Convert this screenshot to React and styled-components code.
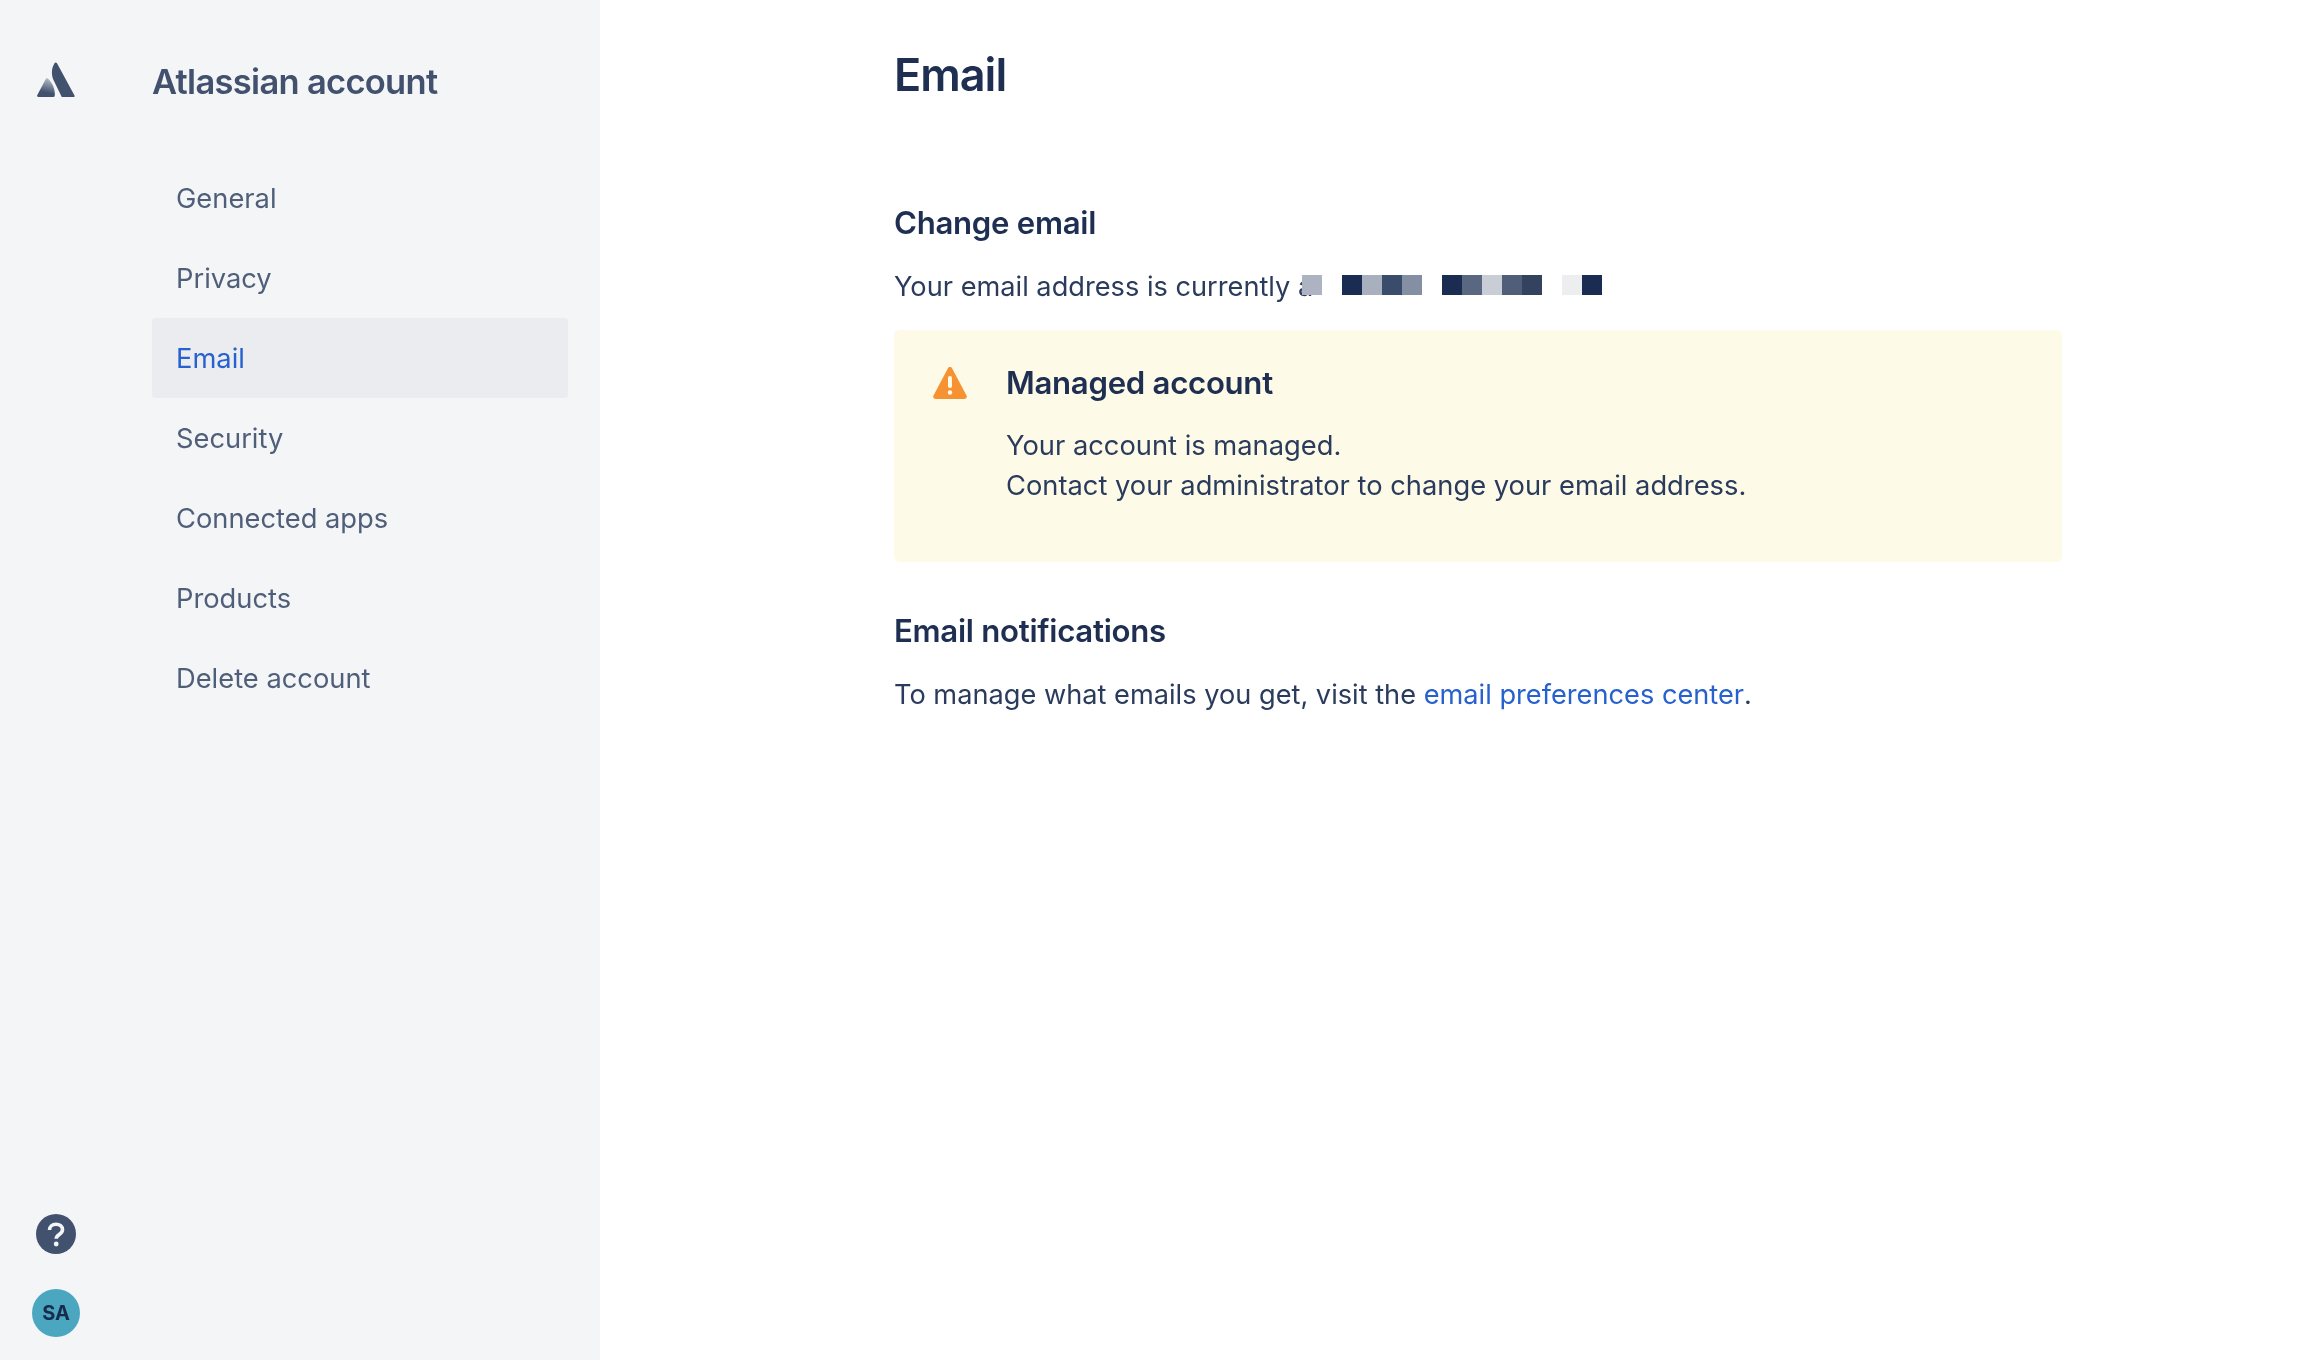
import React from "react";
import styled, { createGlobalStyle } from "styled-components";

const Global = createGlobalStyle`
  html, body { margin: 0; padding: 0; height: 100%; background: #fff; }
  body { font-family: Inter, "Liberation Sans", sans-serif; color: #172B4D; }
`;
const Page = styled.div`display: flex; height: 1360px; overflow: hidden; filter: blur(0.5px);`;
const Sidebar = styled.aside`display: flex; width: 600px; flex: none; background: #F4F5F7;`;
const Rail = styled.div`
  width: 112px; flex: none; display: flex; flex-direction: column; align-items: center;
  justify-content: space-between; padding: 62px 0 23px; box-sizing: border-box;
`;
const RailBottom = styled.div`display: flex; flex-direction: column; align-items: center; gap: 35px;`;
const Avatar = styled.div`
  width: 48px; height: 48px; border-radius: 50%; background: #4BA6C0; color: #172B4D;
  display: flex; align-items: center; justify-content: center; font-size: 20px; font-weight: 700;
`;
const Panel = styled.div`flex: 1; padding: 56px 32px 0 40px; min-width: 0;`;
const Product = styled.div`
  font-size: 34.5px; line-height: 52px; font-weight: 600; color: #42526E; letter-spacing: -0.7px; margin-bottom: 50px;
`;
const Nav = styled.nav`display: flex; flex-direction: column;`;
const NavItem = styled.a`
  height: 80px; display: flex; align-items: center; padding-left: 24px; border-radius: 3px;
  font-size: 27.3px; color: ${p => p.$active ? "#2761CE" : "#505F79"};
  background: ${p => p.$active ? "#EBECF0" : "transparent"};
`;
const Main = styled.main`flex: 1; padding: 46px 0 0 294px; min-width: 0;`;
const Content = styled.div`width: 1168px;`;
const Title = styled.h1`
  margin: 0 0 97px; font-size: 45px; line-height: 58px; font-weight: 600; color: #1E2F52; letter-spacing: -1px;
`;
const Heading = styled.h2`
  margin: 0; font-size: 31.2px; line-height: 44px; font-weight: 600; color: #1E2F52; letter-spacing: -0.3px;
`;
const Text = styled.p`
  margin: 22px 0 0; font-size: 27.2px; line-height: 40px; color: #2A3B5C;
  display: flex; align-items: center; height: 40px; white-space: pre;
`;
const Intro = styled.span`width: 408px; flex: none;`;
const Redact = styled.span`display: flex; height: 20px; margin-top: -5px; position: relative;`;
const Pixel = styled.i`display: block; width: 20px; height: 20px; background: ${p => p.$c || "transparent"};`;
const Alert = styled.section`
  display: flex; gap: 39px; margin: 23px 0 0; height: 232px; box-sizing: border-box;
  background: #FDFAE7; border-radius: 6px; padding: 31px 0 0 39px;
`;
const AlertBody = styled.div`display: flex; flex-direction: column;`;
const AlertIcon = styled.svg`flex: none; margin-top: 6px;`;
const Lines = styled.div`
  margin-top: 21px; font-size: 27.3px; line-height: 40px; color: #2A3B5C;
`;
const Section = styled.div`margin-top: 47px;`;
const Link = styled.a`color: #2761CE;`;

const pixels = ["#ADB3C0", null, "#1B2C53", "#A8AFBD", "#3A4C6C", "#858FA3", null, "#1B2C53", "#5A6780", "#C9CDD6", "#505E79", "#33425F", null, "#ECEEF0", "#1B2C53"];
const items = ["General", "Privacy", "Email", "Security", "Connected apps", "Products", "Delete account"];

export default function App() {
  return (
    <Page>
      <Global />
      <Sidebar>
        <Rail>
          <svg width="38" height="36" viewBox="0 0 38 36" aria-label="Atlassian">
            <defs>
              <linearGradient id="lg" x1="0.6" y1="0" x2="0.4" y2="1">
                <stop offset="0" stopColor="#B5BDCB" />
                <stop offset="0.75" stopColor="#42526E" />
              </linearGradient>
            </defs>
            <path d="M10.500 16.700c-.5-.7-1.300-.6-1.700.2L.2 33.300c-.4.8.2 1.700 1 1.700h15.300c.5 0 .9-.3 1.100-.7 1-4.500-.7-12-7.100-18.300z" fill="url(#lg)" />
            <path d="M17.500 1.200C14 7 14.500 13 16.500 18l8 16.500c.2.400.6.600 1 .600h11c.9 0 1.400-.9 1-1.700L20 1.200c-.5-.9-2-.9-2.500 0z" fill="#42526E" />
          </svg>
          <RailBottom>
            <svg width="40" height="40" viewBox="0 0 40 40" aria-label="Help">
              <circle cx="20" cy="20" r="20" fill="#42526E" />
              <path d="M13.500 16c0-3.600 2.900-5.800 6.500-5.800s6.500 2.300 6.500 5.500c0 4.800-6.300 4.600-6.300 9" fill="none" stroke="#F4F5F7" strokeWidth="3.600" />
              <circle cx="20.200" cy="30" r="2.400" fill="#F4F5F7" />
            </svg>
            <Avatar>SA</Avatar>
          </RailBottom>
        </Rail>
        <Panel>
          <Product>Atlassian account</Product>
          <Nav>
            {items.map(i => <NavItem key={i} $active={i === "Email"}>{i}</NavItem>)}
          </Nav>
        </Panel>
      </Sidebar>
      <Main>
        <Content>
          <Title>Email</Title>
          <Heading>Change email</Heading>
          <Text>
            <Intro>Your email address is currently a</Intro>
            <Redact>{pixels.map((c, i) => <Pixel key={i} $c={c} />)}</Redact>
          </Text>
          <Alert>
            <AlertIcon width="34" height="32" viewBox="0 0 34 32" aria-label="Warning">
              <path d="M14.800 1.400c1-1.800 3.400-1.800 4.400 0l14.300 27c.9 1.700-.3 3.600-2.200 3.600H2.700C.8 32-.4 30.100.5 28.400z" fill="#F79233" />
              <rect x="15" y="9" width="4" height="12" rx="1.800" fill="#FDFAE7" />
              <circle cx="17" cy="25.500" r="2.200" fill="#FDFAE7" />
            </AlertIcon>
            <AlertBody>
              <Heading>Managed account</Heading>
              <Lines>Your account is managed.<br />Contact your administrator to change your email address.</Lines>
            </AlertBody>
          </Alert>
          <Section>
            <Heading>Email notifications</Heading>
            <Text>To manage what emails you get, visit the <Link>email preferences center</Link>.</Text>
          </Section>
        </Content>
      </Main>
    </Page>
  );
}
